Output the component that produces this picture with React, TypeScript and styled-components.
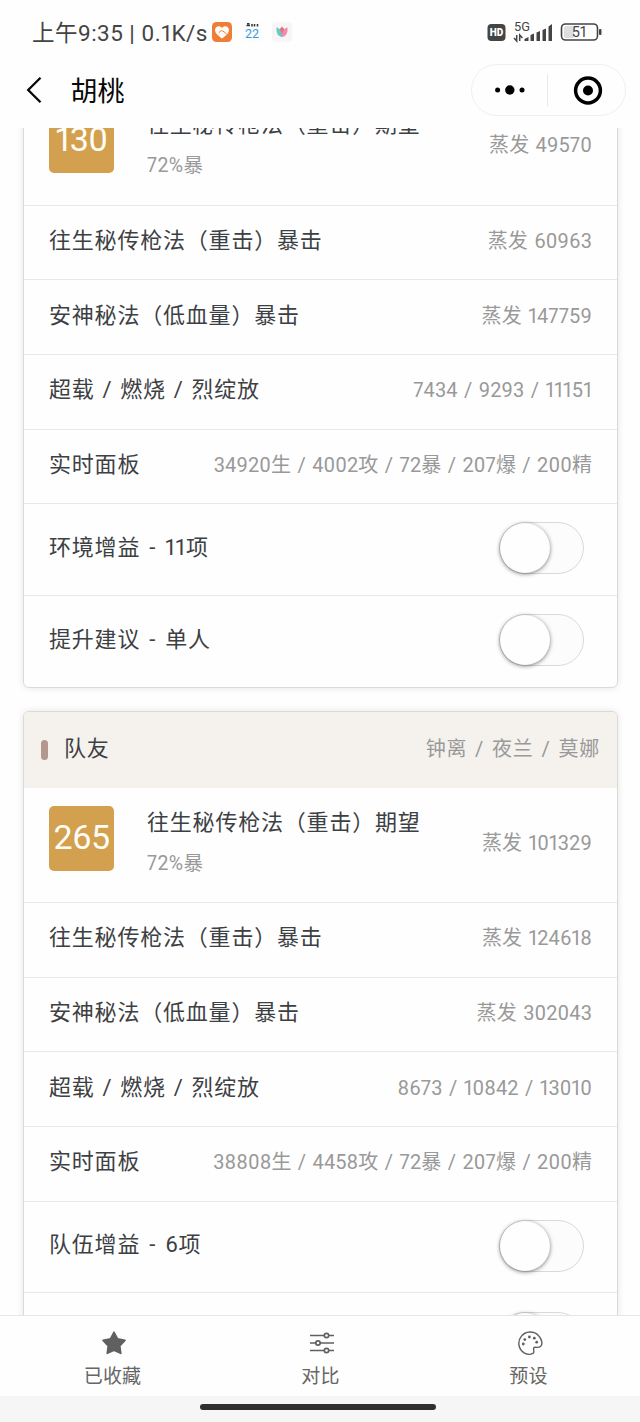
import React from "react";
import styled, { createGlobalStyle } from "styled-components";

const GlobalStyle = createGlobalStyle`
  * { box-sizing: border-box; }
  body {
    margin: 0;
    background: #fefefe;
    font-family: Roboto, "Noto Sans CJK SC", sans-serif;
    font-variant-numeric: proportional-nums;
    white-space: nowrap;
  }
`;

const Screen = styled.div`
  display: flex;
  flex-direction: column;
  width: 640px;
  height: 1422px;
  overflow: hidden;
`;

const StatusBar = styled.header`
  display: flex;
  align-items: center;
  height: 64px;
  padding: 0 37px 0 32px;
  color: #444;
`;

const Clock = styled.span`
  width: 179.5px;
  padding-top: 1px;
  font-size: 22.5px;
  line-height: 30px;
  letter-spacing: 0.45px;
`;

const Notifications = styled.div`
  display: flex;
  align-items: center;
  gap: 10px;
  flex: 1;
`;

const StatusIcons = styled.div`
  display: flex;
  align-items: center;
  height: 30px;
`;

const NavBar = styled.nav`
  display: flex;
  align-items: center;
  height: 64px;
  padding: 0 14px 12px 24px;
`;

const PageTitle = styled.h1`
  flex: 1;
  margin: 0 0 0 24.5px;
  padding-top: 3px;
  font-size: 27px;
  font-weight: 400;
  line-height: 40px;
  color: #080808;
`;

const Capsule = styled.div`
  display: flex;
  align-items: center;
  width: 155px;
  height: 52px;
  border: 1px solid #f0f0f0;
  border-radius: 26px;
`;

const CapsuleButton = styled.div`
  display: flex;
  flex: 1;
  align-items: center;
  justify-content: center;
  & + & {
    height: 32px;
    padding-left: 2px;
    border-left: 1px solid #e8e8e8;
  }
`;

const Content = styled.main`
  height: 1187px;
  overflow: hidden;
  padding: 0 22px 0 23px;
`;

const Card = styled.section<{ $scrolled?: boolean }>`
  margin-top: ${(p) => (p.$scrolled ? "-38.8px" : "22.8px")};
  border: 1px solid #dadada;
  border-radius: 6px;
  background: #fefefe;
  box-shadow: 0 0 7px rgba(0, 0, 0, 0.1);
  overflow: hidden;
`;

const CardHeader = styled.div`
  display: flex;
  align-items: center;
  height: 76px;
  padding: 0 17px 2px;
  background: #f5f2ed;
`;

const Accent = styled.i`
  width: 7px;
  height: 20px;
  margin: 2px 16px 0 0;
  border-radius: 4px;
  background: #b2988e;
`;

const Row = styled.div<{ $h: number; $right?: number }>`
  display: flex;
  align-items: center;
  justify-content: space-between;
  height: ${(p) => p.$h}px;
  padding: 0 ${(p) => p.$right ?? 25}px 3px 25px;
  border-bottom: 1px solid #e9e9e9;
  &:last-child { border-bottom: 0; }
`;

const SummaryRow = styled(Row)`
  align-items: flex-start;
  padding-top: 18px;
`;

const Label = styled.span<{ $gap?: number }>`
  font-size: 22px;
  line-height: 32px;
  letter-spacing: 0.8px;
  word-spacing: ${(p) => p.$gap ?? 1.6}px;
  color: #3d4043;
`;

const HeaderLabel = styled(Label)`
  flex: 1;
`;

const Value = styled.span`
  font-size: 20px;
  line-height: 28px;
  letter-spacing: 0.1px;
  word-spacing: 1.3px;
  color: #999;
`;

const Teammates = styled(Value)`
  letter-spacing: 0.8px;
  word-spacing: 2.1px;
`;

const SummaryValue = styled(Value)`
  margin-top: 23px;
`;

const Score = styled.div`
  width: 65px;
  height: 65px;
  padding-top: 10px;
  border-radius: 5px;
  background: #d2a04f;
  color: #fffdf5;
  font-size: 34px;
  line-height: 42px;
  letter-spacing: -0.6px;
  text-align: center;
`;

const SummaryText = styled.div`
  display: flex;
  flex: 1;
  flex-direction: column;
  gap: 10px;
  margin: 1px 0 0 33px;
`;

const Detail = styled.span`
  font-size: 19.5px;
  line-height: 29px;
  letter-spacing: 0.4px;
  color: #999;
`;

const Switch = styled.div`
  width: 85px;
  height: 52px;
  margin-top: 1px;
  border: 1px solid #d9d9d9;
  border-radius: 26px;
  background: #fcfcfc;
`;

const Knob = styled.div`
  width: 50px;
  height: 50px;
  border-radius: 50%;
  background: #fefefe;
  box-shadow: 0 1px 4px rgba(0, 0, 0, 0.5);
`;

const TabBar = styled.footer`
  display: grid;
  grid-template-columns: repeat(3, 208px);
  justify-content: center;
  height: 81px;
  border-top: 1px solid #e6e6e6;
  background: #fefefe;
`;

const Tab = styled.div`
  display: flex;
  flex-direction: column;
  align-items: center;
  padding: 14px 0 0 1px;
  font-size: 19px;
  line-height: 30px;
  letter-spacing: 0.2px;
  color: #666;
  svg { margin: 0 0 6px 2px; }
`;

const HomeArea = styled.div`
  display: flex;
  justify-content: center;
  height: 26px;
  padding: 8px 4px 0 0;
  background: #f6f6f6;
`;

const HomeIndicator = styled.div`
  width: 236px;
  height: 6px;
  border-radius: 3px;
  background: #303030;
`;

const HealthIcon = () => (
  <svg width="20" height="20" viewBox="0 0 20 20">
    <rect width="20" height="20" rx="4.5" fill="#ee7d35" />
    <path d="M10 16.5C7 14.5 3 11.5 3 8c0-4 5-5 7-2 2-3 7-2 7 2 0 3.500-4 6.500-7 8.500Z" fill="#fffaf3" />
    <path d="m7 10.500 2.500-2 3 1.500 2.500 2.500" fill="none" stroke="#ee7d35" strokeWidth="1" />
  </svg>
);

const CalendarIcon = () => (
  <svg width="20" height="20" viewBox="0 0 20 20">
    <rect width="20" height="20" rx="4" fill="#fafcfd" />
    <path d="M4.500 3.500h3.500M5 1.800h2.500M10 2v2.500M12.500 2v2.500M15.500 2v2.500" stroke="#333" strokeWidth="1.500" />
    <text x="10" y="16" textAnchor="middle" fontFamily="Roboto" fontSize="12.500" fill="#3a9bd8">22</text>
  </svg>
);

const TulipIcon = () => (
  <svg width="20" height="20" viewBox="0 0 20 20">
    <rect width="20" height="20" rx="4" fill="#f7f5f6" />
    <path d="M10 4.500 13 8 10 15 7 8Z" fill="#ea6f7f" />
    <path d="M4.500 5.500c3.500.5 5.500 4 5.500 9.500-4-.5-6-4-5.500-9.500Z" fill="#6cc9bd" />
    <path d="M15.500 5.500c-3.500.5-5.500 4-5.500 9.500 4-.5 6-4 5.500-9.500Z" fill="#f08daf" />
  </svg>
);

const NetworkIcons = () => (
  <svg width="116" height="30" viewBox="487 17 116 30" fontFamily="Roboto" fill="#444">
    <rect x="487.500" y="24" width="18" height="17" rx="4" />
    <text x="496.500" y="36.300" textAnchor="middle" fontSize="10" fontWeight="900" fill="#fff">HD</text>
    <text x="514" y="30.500" fontSize="12.500" textLength="16" lengthAdjust="spacingAndGlyphs">5G</text>
    <path d="M516.700 35v6l-2.700-3M519.700 41v-6l2.700 3" fill="none" stroke="#444" strokeWidth="1.500" />
    <path d="M524.500 41v-2l4-2v4ZM530.500 41v-6l3.500-1.500V41ZM536.500 41v-8.500l3.500-1.500v10ZM542.500 41V30l3.500-1.500V41ZM548.500 41V26.500l3.500-2.500V41Z" />
    <rect x="561.500" y="24" width="36" height="16" rx="4" fill="none" stroke="#444" strokeWidth="1.600" />
    <rect x="564" y="26" width="10" height="12" rx="1.500" fill="#dedede" />
    <text x="579" y="37.200" textAnchor="middle" fontSize="14.500">51</text>
    <rect x="599" y="29" width="2.500" height="6" rx="1" />
  </svg>
);

const BackIcon = () => (
  <svg width="22" height="30" viewBox="0 0 22 30" fill="none" stroke="#080808" strokeWidth="2.300">
    <path d="M16.500 2.800 4.200 15l12.300 12.200" />
  </svg>
);

const MoreIcon = () => (
  <svg width="32" height="12" viewBox="0 0 32 12">
    <circle cx="3.600" cy="6" r="2.500" />
    <circle cx="15.800" cy="6" r="4.700" />
    <circle cx="28" cy="6" r="2.500" />
  </svg>
);

const TargetIcon = () => (
  <svg width="30" height="30" viewBox="0 0 30 30">
    <circle cx="15" cy="15.500" r="12.400" fill="none" stroke="#000" strokeWidth="3.500" />
    <circle cx="15" cy="15.500" r="5" />
  </svg>
);

const StarIcon = () => (
  <svg width="26" height="26" viewBox="0 0 26 26">
    <path
      d="m13 2.300 3.500 6.700 7.400 1.300-5.200 5.500 1 7.500L13 20.100l-6.700 3.200 1-7.500-5.200-5.500L9.500 9Z"
      fill="#606060" stroke="#606060" strokeWidth="1.800" strokeLinejoin="round"
    />
  </svg>
);

const SlidersIcon = () => (
  <svg width="26" height="26" viewBox="0 0 26 26" fill="#fefefe" stroke="#606060" strokeWidth="1.700">
    <path d="M1 5.500h24M1 13h24M1 20.500h24" />
    <circle cx="17.500" cy="5.500" r="2.200" />
    <circle cx="9" cy="13" r="2.200" />
    <circle cx="17.500" cy="20.500" r="2.200" />
  </svg>
);

const PaletteIcon = () => (
  <svg width="26" height="26" viewBox="0 0 26 26">
    <path
      d="M16.300 23.100C18 22.100 15.300 18.300 17.200 17.500c1.700-.7 4.400.8 6.500-1.200 2.500-2.500.7-8-2.300-10.900A11.400 11.400 0 1 0 7.500 23.200c3 1.600 6.700 1.200 8.800-.1Z"
      fill="none" stroke="#606060" strokeWidth="1.400"
    />
    <g fill="#606060">
      <circle cx="6.300" cy="14" r="1.400" />
      <circle cx="7.800" cy="9.600" r="1.400" />
      <circle cx="12.400" cy="7" r="1.400" />
      <circle cx="17.300" cy="8.200" r="1.400" />
      <circle cx="19.700" cy="12.200" r="1.400" />
    </g>
  </svg>
);

type Stats = { score: number; expected: string; rows: [string, string][]; toggles: string[] };

const solo: Stats = {
  score: 130,
  expected: "蒸发 49570",
  rows: [
    ["往生秘传枪法（重击）暴击", "蒸发 60963"],
    ["安神秘法（低血量）暴击", "蒸发 147759"],
    ["超载 / 燃烧 / 烈绽放", "7434 / 9293 / 11151"],
    ["实时面板", "34920生 / 4002攻 / 72暴 / 207爆 / 200精"],
  ],
  toggles: ["环境增益 - 11项", "提升建议 - 单人"],
};

const team: Stats = {
  score: 265,
  expected: "蒸发 101329",
  rows: [
    ["往生秘传枪法（重击）暴击", "蒸发 124618"],
    ["安神秘法（低血量）暴击", "蒸发 302043"],
    ["超载 / 燃烧 / 烈绽放", "8673 / 10842 / 13010"],
    ["实时面板", "38808生 / 4458攻 / 72暴 / 207爆 / 200精"],
  ],
  toggles: ["队伍增益 - 6项", ""],
};

const StatRows = ({ stats }: { stats: Stats }) => (
  <>
    <SummaryRow $h={115.5}>
      <Score>{stats.score}</Score>
      <SummaryText>
        <Label>往生秘传枪法（重击）期望</Label>
        <Detail>72%暴</Detail>
      </SummaryText>
      <SummaryValue>{stats.expected}</SummaryValue>
    </SummaryRow>
    {stats.rows.map(([label, value]) => (
      <Row key={label} $h={74.65}>
        <Label>{label}</Label>
        <Value>{value}</Value>
      </Row>
    ))}
    {stats.toggles.map((label) => (
      <Row key={label} $h={91.3} $right={33}>
        <Label $gap={2.8}>{label}</Label>
        <Switch><Knob /></Switch>
      </Row>
    ))}
  </>
);

export default function App() {
  return (
    <Screen>
      <GlobalStyle />
      <StatusBar>
        <Clock>上午9:35 | 0.1K/s</Clock>
        <Notifications>
          <HealthIcon />
          <CalendarIcon />
          <TulipIcon />
        </Notifications>
        <StatusIcons><NetworkIcons /></StatusIcons>
      </StatusBar>
      <NavBar>
        <BackIcon />
        <PageTitle>胡桃</PageTitle>
        <Capsule>
          <CapsuleButton><MoreIcon /></CapsuleButton>
          <CapsuleButton><TargetIcon /></CapsuleButton>
        </Capsule>
      </NavBar>
      <Content>
        <Card $scrolled>
          <StatRows stats={solo} />
        </Card>
        <Card>
          <CardHeader>
            <Accent />
            <HeaderLabel>队友</HeaderLabel>
            <Teammates>钟离 / 夜兰 / 莫娜</Teammates>
          </CardHeader>
          <StatRows stats={team} />
        </Card>
      </Content>
      <TabBar>
        <Tab><StarIcon />已收藏</Tab>
        <Tab><SlidersIcon />对比</Tab>
        <Tab><PaletteIcon />预设</Tab>
      </TabBar>
      <HomeArea><HomeIndicator /></HomeArea>
    </Screen>
  );
}
